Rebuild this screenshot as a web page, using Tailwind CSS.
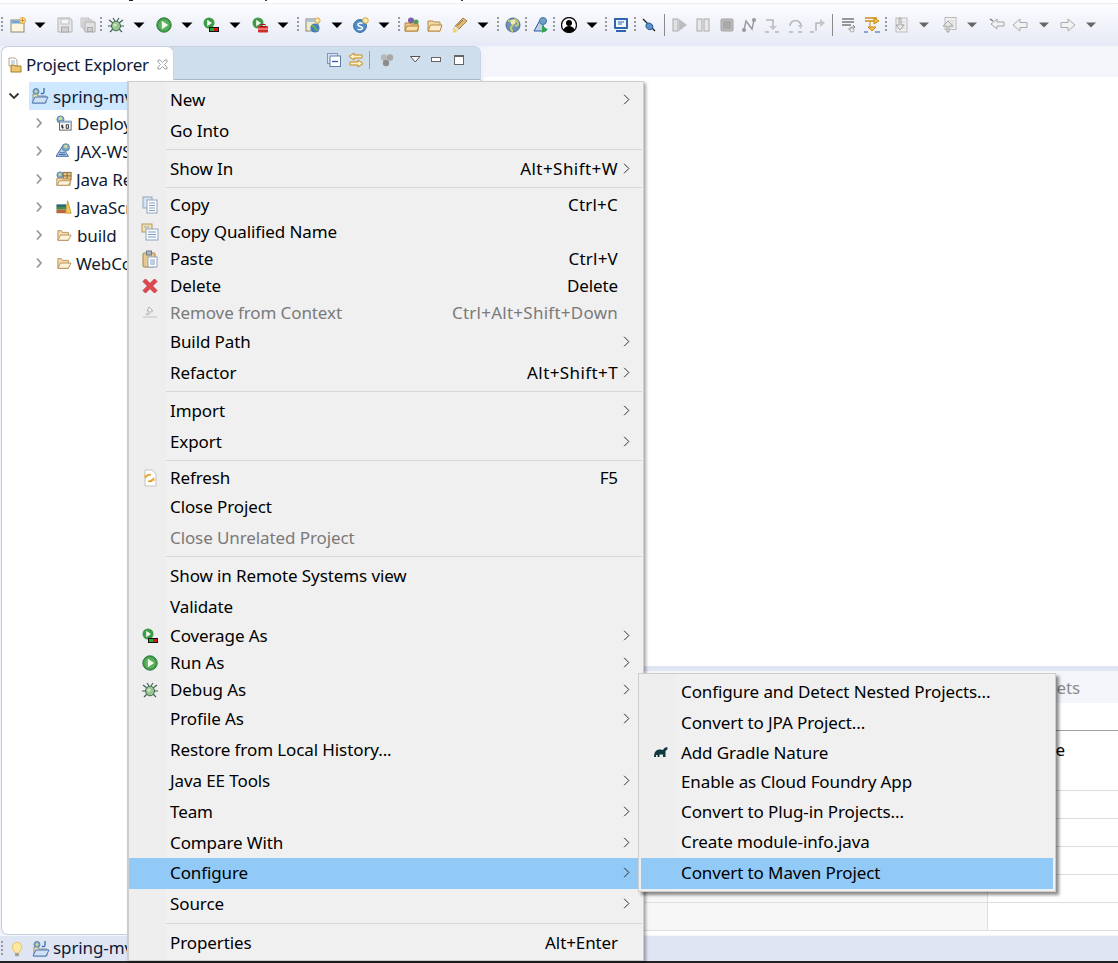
<!DOCTYPE html>
<html><head><meta charset="utf-8">
<script src="https://cdn.jsdelivr.net/npm/@tailwindcss/browser@4"></script>
</head>
<body class="bg-white">
<svg width="0" height="0" class="absolute">
<defs>
<symbol id="arrow" viewBox="0 0 16 16"><polygon points="2.5,5.5 13.5,5.5 8,11" fill="#000"/></symbol>
<symbol id="garrow" viewBox="0 0 16 16"><polygon points="3,5.5 13,5.5 8,10.5" fill="#666"/></symbol>
<symbol id="handle" viewBox="0 0 16 16"><g fill="#9a9a9a"><rect x="7" y="0" width="2" height="2"/><rect x="7" y="4" width="2" height="2"/><rect x="7" y="8" width="2" height="2"/><rect x="7" y="12" width="2" height="2"/></g></symbol>
<symbol id="new" viewBox="0 0 16 16"><rect x="1" y="3" width="13" height="12" fill="#fdf6dc" stroke="#8a8a78"/><rect x="1.5" y="3.5" width="12" height="3" fill="#6da5dc"/><circle cx="12.5" cy="3.5" r="3" fill="#fbe9a8" stroke="#d9a53c"/><path d="M12.5 1.5v4M10.5 3.5h4" stroke="#d08a20"/></symbol>
<symbol id="save" viewBox="0 0 16 16"><path d="M1 1h12l2 2v12H1z" fill="#e6e6e6" stroke="#b5b5b5"/><rect x="4" y="2" width="8" height="5" fill="#f6f6f6" stroke="#c0c0c0"/><rect x="4.5" y="10" width="7" height="5" fill="#cfcfcf" stroke="#aaa"/></symbol>
<symbol id="saveall" viewBox="0 0 16 16"><path d="M1 1h8v9H1z" fill="#e8e8e8" stroke="#c0c0c0"/><path d="M3 3h9v9H3z" fill="#e8e8e8" stroke="#bbb"/><path d="M5 5h10v10H5z" fill="#e2e2e2" stroke="#aaa"/><rect x="7.5" y="10.5" width="5" height="4" fill="#ccc" stroke="#aaa"/></symbol>
<symbol id="bug" viewBox="0 0 16 16"><g stroke="#3c5a50" stroke-width="1.1"><path d="M1 3l4 3M15 3l-4 3M0 9h4M16 9h-4M2 15l3-3M14 15l-3-3M5 1l2 3M11 1l-2 3"/></g><ellipse cx="8" cy="9" rx="4.5" ry="4.8" fill="#9bc58e" stroke="#3d6b54"/><circle cx="7" cy="8" r="1.6" fill="#d5ead0"/></symbol>
<symbol id="run" viewBox="0 0 16 16"><circle cx="8" cy="8" r="7.2" fill="#3f9b4a" stroke="#2f7a3a"/><circle cx="8" cy="8" r="5.6" fill="#58b05c"/><polygon points="5.8,3.8 12.2,8 5.8,12.2" fill="#f4f9ec"/></symbol>
<symbol id="cov" viewBox="0 0 16 16"><circle cx="6" cy="6" r="5.5" fill="#3f9b4a"/><polygon points="4.2,2.8 9,6 4.2,9.2" fill="#f4f9ec"/><rect x="6" y="10" width="10" height="5" fill="#111"/><rect x="7" y="11" width="4" height="3" fill="#1faa2e"/><rect x="11" y="11" width="4" height="3" fill="#d81818"/></symbol>
<symbol id="tool" viewBox="0 0 16 16"><circle cx="6" cy="6" r="5.5" fill="#3f9b4a"/><polygon points="4.2,2.8 9,6 4.2,9.2" fill="#f4f9ec"/><rect x="6" y="9" width="10" height="6.5" rx="1" fill="#d22c2c"/><rect x="9" y="7.5" width="4" height="2" fill="none" stroke="#a01818"/><path d="M6 12h10" stroke="#ffc0c0"/></symbol>
<symbol id="server" viewBox="0 0 16 16"><rect x="1" y="2" width="12" height="12" fill="#f0ead0" stroke="#8c8470"/><rect x="1.5" y="2.5" width="11" height="2.5" fill="#a9c4e0"/><circle cx="10" cy="11" r="4.6" fill="#3f7fc0"/><path d="M7 9c2 0 3 1 3 2s1 2 3 2" stroke="#6fb050" stroke-width="2" fill="none"/><circle cx="12.5" cy="3.5" r="2.6" fill="#fbe9a8" stroke="#d9a53c"/></symbol>
<symbol id="spring" viewBox="0 0 16 16"><circle cx="7" cy="9" r="6.4" fill="#4f8cc8" stroke="#37689c"/><path d="M9.500 6.500C8 5.500 4.500 6 5 8s4.500 1 4.500 3-3.500 2-5 1" fill="none" stroke="#fff" stroke-width="1.500"/><circle cx="12.5" cy="3.5" r="2.8" fill="#fbe9a8" stroke="#d9a53c"/></symbol>
<symbol id="openj" viewBox="0 0 16 16"><circle cx="7" cy="3.5" r="3" fill="#7a5ea8"/><circle cx="12" cy="5" r="2.6" fill="#4f9c58"/><path d="M1 6h5l1 1h7v7H1z" fill="#ecc98a" stroke="#b7813a"/><path d="M1 14l2-5h12l-2 5z" fill="#f7dfa8" stroke="#b7813a"/></symbol>
<symbol id="open" viewBox="0 0 16 16"><path d="M2 4h4l1 1h6v9H1V4z" fill="#f0d9a8" stroke="#b98a44"/><path d="M1 14l2.500-6H15l-2 6z" fill="#fbeccb" stroke="#b98a44"/></symbol>
<symbol id="pen" viewBox="0 0 16 16"><path d="M3 9L11 1l4 3-8 8z" fill="#e0b878" stroke="#a98646"/><path d="M3 9l4 3-2.500 2-3-2z" fill="#f5ead0" stroke="#c0a878" stroke-width=".6"/><path d="M5 9l6-6" stroke="#8a6a38"/><circle cx="2.500" cy="14" r="1.800" fill="#f7d448"/></symbol>
<symbol id="globe" viewBox="0 0 16 16"><circle cx="8" cy="8" r="7" fill="#6d8fb8" stroke="#4d6d96"/><path d="M3 4c3-1 5 1 5 3s-2 2-2 4 1 3 2 3M9 2c2 1 4 3 4 5s-2 2-3 1" stroke="#c0cc70" stroke-width="2" fill="none"/><circle cx="8" cy="5" r="2.500" fill="#f0e8b0"/></symbol>
<symbol id="wsdl" viewBox="0 0 16 16"><polygon points="7,3 1,14 13,14" fill="#bcd0e8" stroke="#2e5a9c"/><circle cx="10" cy="4" r="3.500" fill="#6d9fc8" stroke="#4a74a0"/><polygon points="9,9 15,12.500 9,16" fill="#2da844"/></symbol>
<symbol id="person" viewBox="0 0 16 16"><circle cx="8" cy="8" r="7.500" fill="#fff" stroke="#111" stroke-width="1.300"/><circle cx="8" cy="6" r="3" fill="#000"/><path d="M2.500 13c1-3 3-4 5.500-4s4.500 1 5.500 4c-2 3-9 3-11 0z" fill="#000"/></symbol>
<symbol id="monitor" viewBox="0 0 16 16"><rect x="1" y="1" width="14" height="11" rx="1" fill="#2f65ac"/><rect x="3" y="3" width="10" height="7" fill="#f2f6fb"/><path d="M5 5h6M5 7h4" stroke="#2f65ac"/><rect x="3" y="13" width="10" height="2" fill="#2f65ac"/></symbol>
<symbol id="nobreak" viewBox="0 0 16 16"><path d="M2 2l12 12" stroke="#1d1d1d" stroke-width="1.200"/><ellipse cx="8.500" cy="9" rx="3.500" ry="3" transform="rotate(40 8 9)" fill="#5c92cc" stroke="#2c5f9c"/></symbol>
<symbol id="resume" viewBox="0 0 16 16"><rect x="1" y="2" width="5" height="12" fill="#e0e0e0" stroke="#aaa"/><polygon points="7,2 15,8 7,14" fill="#bdbdbd"/></symbol>
<symbol id="pause" viewBox="0 0 16 16"><rect x="2" y="2" width="5" height="12" fill="#e8e8e8" stroke="#aaa"/><rect x="9" y="2" width="5" height="12" fill="#e8e8e8" stroke="#aaa"/></symbol>
<symbol id="stop" viewBox="0 0 16 16"><rect x="2" y="2" width="12" height="12" rx="1" fill="#bbb" stroke="#a5a5a5"/><rect x="4" y="4" width="8" height="8" fill="#a9a9a9"/></symbol>
<symbol id="disc" viewBox="0 0 16 16"><path d="M3 13l2-9 6 8 2-9" fill="none" stroke="#9a9a9a" stroke-width="1.400"/><circle cx="3" cy="13" r="2" fill="#999"/><circle cx="13" cy="3" r="2" fill="#999"/></symbol>
<symbol id="into" viewBox="0 0 16 16"><path d="M2 3h7v7" fill="none" stroke="#b5b5b5" stroke-width="1.500"/><polygon points="5,9 13,9 9,13" fill="#c5c5c5"/><path d="M1 15h4M11 15h4" stroke="#999"/></symbol>
<symbol id="over" viewBox="0 0 16 16"><path d="M2 9a5.500 5.500 0 0 1 11 0" fill="none" stroke="#b5b5b5" stroke-width="1.500"/><polygon points="10,8 15,8 12.500,12" fill="#c5c5c5"/><path d="M1 15h4M10 15h4" stroke="#999"/></symbol>
<symbol id="ret" viewBox="0 0 16 16"><path d="M6 14V6h6" fill="none" stroke="#b5b5b5" stroke-width="1.500"/><polygon points="10,2 15,6 10,10" fill="#c5c5c5"/><path d="M0 15h4" stroke="#999"/></symbol>
<symbol id="filter" viewBox="0 0 16 16"><path d="M1 2h12M1 5h12M1 8h9" stroke="#7a7a7a" stroke-width="1.400"/><path d="M8 13c0-3 2-3 6-3l-2-2m2 2l-2 2" stroke="#8a8a8a" fill="none"/><circle cx="11" cy="13" r="2" fill="none" stroke="#aaa"/></symbol>
<symbol id="use" viewBox="0 0 16 16"><path d="M1 4h10M1 1h12" stroke="#d08a10" stroke-width="1.400"/><path d="M6 4v7h2" stroke="#d08a10" fill="none"/><polygon points="10,1 15,4 10,7" fill="#f3c450" stroke="#c88a10"/><polygon points="4,10 12,10 8,14" fill="#f3c450" stroke="#c88a10"/><path d="M0 15h4M11 15h5" stroke="#2c5f9c" stroke-width="1.200"/></symbol>
<symbol id="nexta" viewBox="0 0 16 16"><rect x="3" y="1" width="11" height="14" fill="#f0f0f0" stroke="#bbb"/><path d="M6 5h6M6 8h6M6 11h6" stroke="#ccc"/><path d="M6 1v7H3l4 5 4-5H8V1z" fill="#e8e8e8" stroke="#a5a5a5"/></symbol>
<symbol id="preva" viewBox="0 0 16 16"><rect x="4" y="0.500" width="11" height="12" fill="#f0f0f0" stroke="#bbb"/><path d="M7 4h6M7 7h6M7 10h6" stroke="#ccc"/><path d="M6 15V9H2l5-5 5 5H8v6z" fill="#e8e8e8" stroke="#a5a5a5"/></symbol>
<symbol id="lasted" viewBox="0 0 16 16"><path d="M15 5H8V2L2 7l6 5V9h7z" fill="#f2f2f2" stroke="#a5a5a5"/><path d="M1 2l3 2" stroke="#777" stroke-width="1.500"/></symbol>
<symbol id="left" viewBox="0 0 16 16"><path d="M15 5.500H8V2L1 8l7 6v-3.500h7z" fill="#f2f2f2" stroke="#aaa"/></symbol>
<symbol id="right" viewBox="0 0 16 16"><path d="M1 5.500h7V2l7 6-7 6v-3.500H1z" fill="#f2f2f2" stroke="#aaa"/></symbol>
<symbol id="project" viewBox="0 0 18 18"><circle cx="5" cy="4.500" r="3" fill="#7ba7cc" stroke="#5c88ac"/><circle cx="5" cy="4.500" r="1.300" fill="#d6dc88"/><path d="M13 1v4c0 2-2 2-3 1" stroke="#3a6ab0" stroke-width="1.300" fill="none"/><path d="M2 7h4l1 2h8v7H2z" fill="#f2dc9e" stroke="#7f8eab"/><path d="M1 16l3-6h13l-3 6z" fill="#cfe1f5" stroke="#4c78b4"/></symbol>
<symbol id="folder" viewBox="0 0 18 16"><path d="M2 3h4l1 2h7v9H2z" fill="#f2dcae" stroke="#b58a52"/><path d="M2 14l3-6h12l-3 6z" fill="#fdf3da" stroke="#b58a52"/></symbol>
<symbol id="deploy" viewBox="0 0 18 18"><circle cx="5" cy="5" r="4" fill="#7ba7cc" stroke="#5c88ac"/><circle cx="5" cy="4" r="2" fill="#d6dc88"/><rect x="4" y="7" width="13" height="10" fill="#f6f6f6" stroke="#555"/><rect x="4" y="7" width="13" height="2" fill="#9abcdc"/><path d="M6.500 11v3h2M7.500 11v4.500M11.500 11h2.500v4h-2.500z" stroke="#222" fill="none"/></symbol>
<symbol id="jax" viewBox="0 0 18 18"><polygon points="7,4 0,15 14,15" fill="#b9cfe8" stroke="#2e5a9c"/><path d="M4 11h6M3 13h8" stroke="#2e5a9c"/><circle cx="11" cy="5" r="4.200" fill="#7ba7cc" stroke="#5c88ac"/><circle cx="11" cy="4" r="2" fill="#d6dc88"/></symbol>
<symbol id="jres" viewBox="0 0 18 18"><circle cx="4.500" cy="4.500" r="3.500" fill="#7ba7cc" stroke="#5c88ac"/><circle cx="4.500" cy="4" r="1.600" fill="#d6dc88"/><rect x="8" y="1.500" width="9" height="8" fill="#e2c283" stroke="#8a5f30"/><path d="M8 5.500h9M12.500 1.500v8" stroke="#8a5f30"/><path d="M1 8h5l1 1h9v7H1z" fill="#f2dcae" stroke="#b58a52"/><path d="M1 16l3-5h13l-3 5z" fill="#fdf3da" stroke="#b58a52"/></symbol>
<symbol id="js" viewBox="0 0 18 18"><rect x="0.500" y="6" width="11" height="3" fill="#2c6a78"/><rect x="0.500" y="9" width="11" height="3" fill="#4a8a4a"/><rect x="0.500" y="12" width="11" height="4" fill="#b8683a"/><path d="M13 2l4 14h-6z" fill="#f1c95e" stroke="#c89a30"/></symbol>
<symbol id="copy" viewBox="0 0 18 18"><rect x="2" y="1" width="9" height="11" fill="#d9e4f2" stroke="#8fa5bd"/><rect x="6" y="4" width="10" height="13" fill="#fff" stroke="#8fa5bd"/><path d="M8 7h6M8 9.500h6M8 12h6M8 14.500h6" stroke="#7d9dc0"/></symbol>
<symbol id="copyq" viewBox="0 0 18 18"><rect x="1" y="1" width="10" height="8" fill="#f2e0b5" stroke="#b5975e"/><rect x="5" y="6" width="12" height="11" fill="#f8fbff" stroke="#8fa5bd"/><path d="M7 9h8M7 11.500h8M7 14h8" stroke="#7d9dc0"/><path d="M3 4h5" stroke="#8fa5bd"/></symbol>
<symbol id="paste" viewBox="0 0 18 18"><rect x="2" y="3" width="12" height="14" rx="1" fill="#e7c88e" stroke="#a8834a"/><rect x="5.500" y="1" width="5" height="4" fill="#a9b8c9" stroke="#6d7a8c"/><rect x="7" y="7" width="9" height="10" fill="#fff" stroke="#8fa5bd"/><path d="M9 10h5M9 12h5M9 14h5" stroke="#7d9dc0"/></symbol>
<symbol id="delete" viewBox="0 0 18 18"><path d="M2 4.500L4.500 2 9 6.500 13.500 2 16 4.500 11.500 9 16 13.500 13.500 16 9 11.500 4.500 16 2 13.500 6.500 9z" fill="#e0484f" stroke="#c93a42"/></symbol>
<symbol id="remove" viewBox="0 0 18 18"><path d="M8 3l4 4H10c0 3-3 4-5 3 2 0 3-1 3-3H6z" fill="#f4f4f4" stroke="#b0b0b0"/><path d="M2 13h14" stroke="#c0c0c0"/></symbol>
<symbol id="refresh" viewBox="0 0 18 18"><path d="M4 1h7l4 4v12H4z" fill="#fff" stroke="#c2c2c2"/><path d="M10 6a4 4 0 0 0-5 2" stroke="#d8a030" stroke-width="1.800" fill="none"/><path d="M7 12a4 4 0 0 0 5-2" stroke="#d8a030" stroke-width="1.800" fill="none"/><polygon points="3,6 7,7 4,10" fill="#e8b040"/><polygon points="14,12 10,11 13,8" fill="#e8b040"/></symbol>
<symbol id="gradle" viewBox="0 0 14 12"><path d="M0 11C0 6 2 3.500 6 3.500c1.500 0 2.500.5 3 .5C10 2 12 .5 13.500 1.500c.5 2-1 2.500-2 3.500v6H9V8.500H5.500V11H3.500V9H2v2z" fill="#0e3a40"/></symbol>
<symbol id="chev" viewBox="0 0 8 14"><path d="M1 1l6 6-6 6" fill="none" stroke="#222" stroke-width="1.200"/></symbol>
<symbol id="tchev" viewBox="0 0 10 12"><path d="M3 1.500l4 4.500-4 4.500" fill="none" stroke="#9a9a9a" stroke-width="1.800"/></symbol>
<symbol id="tdown" viewBox="0 0 12 10"><path d="M1.500 2.500L6 7l4.500-4.500" fill="none" stroke="#333" stroke-width="1.800"/></symbol>
</defs>
</svg>

<div class="relative w-[1118px] h-[963px] overflow-hidden flex flex-col bg-[#e0e5f4] text-[#000] font-['Noto_Sans','Open_Sans',sans-serif] text-[17px] leading-none tracking-[-0.1px]">

  <div class="h-[4px] bg-white border-b border-[#eeeeee] shrink-0 flex">
    <span class="ml-[129px] w-[4px] h-px bg-[#222]"></span>
    <span class="ml-[132px] w-[2px] h-px bg-[#444]"></span>
    <span class="ml-[194px] w-[2px] h-px bg-[#444]"></span>
  </div>

  <div class="h-[42px] shrink-0 flex items-center bg-gradient-to-b from-[#fbfcfe] to-[#e6eaf6]">
    <svg class="w-4 h-4 shrink-0 ml-[-6px]"><use href="#handle"/></svg>
    <svg class="w-4 h-4 shrink-0"><use href="#new"/></svg>
    <svg class="w-4 h-4 shrink-0 ml-[6px]"><use href="#arrow"/></svg>
    <svg class="w-4 h-4 shrink-0 ml-[9px]"><use href="#save"/></svg>
    <svg class="w-4 h-4 shrink-0 ml-[7px]"><use href="#saveall"/></svg>
    <svg class="w-4 h-4 shrink-0 ml-[-3px]"><use href="#handle"/></svg>
    <svg class="w-4 h-4 shrink-0 ml-[-1px]"><use href="#bug"/></svg>
    <svg class="w-4 h-4 shrink-0 ml-[7px]"><use href="#arrow"/></svg>
    <svg class="w-4 h-4 shrink-0 ml-[9px]"><use href="#run"/></svg>
    <svg class="w-4 h-4 shrink-0 ml-[7px]"><use href="#arrow"/></svg>
    <svg class="w-4 h-4 shrink-0 ml-[8px]"><use href="#cov"/></svg>
    <svg class="w-4 h-4 shrink-0 ml-[8px]"><use href="#arrow"/></svg>
    <svg class="w-4 h-4 shrink-0 ml-[9px]"><use href="#tool"/></svg>
    <svg class="w-4 h-4 shrink-0 ml-[7px]"><use href="#arrow"/></svg>
    <svg class="w-4 h-4 shrink-0 ml-[-1px]"><use href="#handle"/></svg>
    <svg class="w-4 h-4 shrink-0 ml-[-1px]"><use href="#server"/></svg>
    <svg class="w-4 h-4 shrink-0 ml-[8px]"><use href="#arrow"/></svg>
    <svg class="w-4 h-4 shrink-0 ml-[8px]"><use href="#spring"/></svg>
    <svg class="w-4 h-4 shrink-0 ml-[7px]"><use href="#arrow"/></svg>
    <svg class="w-4 h-4 shrink-0 ml-[-1px]"><use href="#handle"/></svg>
    <svg class="w-4 h-4 shrink-0 ml-[-3px]"><use href="#openj"/></svg>
    <svg class="w-4 h-4 shrink-0 ml-[7px]"><use href="#open"/></svg>
    <svg class="w-4 h-4 shrink-0 ml-[9px]"><use href="#pen"/></svg>
    <svg class="w-4 h-4 shrink-0 ml-[7px]"><use href="#arrow"/></svg>
    <svg class="w-4 h-4 shrink-0 ml-[-1px]"><use href="#handle"/></svg>
    <svg class="w-4 h-4 shrink-0 ml-[-1px]"><use href="#globe"/></svg>
    <svg class="w-4 h-4 shrink-0 ml-[-3px]"><use href="#handle"/></svg>
    <svg class="w-4 h-4 shrink-0 ml-[-1px]"><use href="#wsdl"/></svg>
    <svg class="w-4 h-4 shrink-0 ml-[-3px]"><use href="#handle"/></svg>
    <svg class="w-4 h-4 shrink-0 ml-[-1px]"><use href="#person"/></svg>
    <svg class="w-4 h-4 shrink-0 ml-[7px]"><use href="#arrow"/></svg>
    <svg class="w-4 h-4 shrink-0 ml-[-2px]"><use href="#handle"/></svg>
    <svg class="w-4 h-4 shrink-0 ml-[-1px]"><use href="#monitor"/></svg>
    <svg class="w-4 h-4 shrink-0 ml-[-2px]"><use href="#handle"/></svg>
    <svg class="w-4 h-4 shrink-0 ml-[-2px]"><use href="#nobreak"/></svg>
    <span class="w-px h-[22px] bg-[#8a8a8a] shrink-0 ml-[7px]"></span>
    <svg class="w-4 h-4 shrink-0 ml-[7px]"><use href="#resume"/></svg>
    <svg class="w-4 h-4 shrink-0 ml-[7px]"><use href="#pause"/></svg>
    <svg class="w-4 h-4 shrink-0 ml-[8px]"><use href="#stop"/></svg>
    <svg class="w-4 h-4 shrink-0 ml-[6px]"><use href="#disc"/></svg>
    <svg class="w-4 h-4 shrink-0 ml-[7px]"><use href="#into"/></svg>
    <svg class="w-4 h-4 shrink-0 ml-[8px]"><use href="#over"/></svg>
    <svg class="w-4 h-4 shrink-0 ml-[6px]"><use href="#ret"/></svg>
    <span class="w-px h-[22px] bg-[#8a8a8a] shrink-0 ml-[6px]"></span>
    <svg class="w-4 h-4 shrink-0 ml-[8px]"><use href="#filter"/></svg>
    <svg class="w-4 h-4 shrink-0 ml-[7px]"><use href="#use"/></svg>
    <svg class="w-4 h-4 shrink-0 ml-[-2px]"><use href="#handle"/></svg>
    <svg class="w-4 h-4 shrink-0 ml-[-1px]"><use href="#nexta"/></svg>
    <svg class="w-4 h-4 shrink-0 ml-[7px]"><use href="#garrow"/></svg>
    <svg class="w-4 h-4 shrink-0 ml-[9px]"><use href="#preva"/></svg>
    <svg class="w-4 h-4 shrink-0 ml-[7px]"><use href="#garrow"/></svg>
    <svg class="w-4 h-4 shrink-0 ml-[9px]"><use href="#lasted"/></svg>
    <svg class="w-4 h-4 shrink-0 ml-[7px]"><use href="#left"/></svg>
    <svg class="w-4 h-4 shrink-0 ml-[8px]"><use href="#garrow"/></svg>
    <svg class="w-4 h-4 shrink-0 ml-[8px]"><use href="#right"/></svg>
    <svg class="w-4 h-4 shrink-0 ml-[7px]"><use href="#garrow"/></svg>
  </div>

  <div class="h-[889px] shrink-0 flex bg-[#f0f3fa]">
    <!-- left view -->
    <div class="w-[480px] ml-px flex flex-col">
      <div class="h-[34px] shrink-0 flex bg-[#cfdeed] rounded-t-[7px] border-t border-r border-[#c8d2e2]">
        <div class="w-[173px] h-[34px] bg-white rounded-t-[7px] border-l border-r border-t border-[#c8d2e2] -mt-px flex items-center pl-[5px] pt-[2px] tracking-[-0.25px]">
          <svg class="w-[16px] h-[16px] shrink-0" viewBox="0 0 16 16"><path d="M2 1h6l2 2v6H2z" fill="#fff" stroke="#b5a88e"/><path d="M4 4h4M4 6h4" stroke="#9db3cc"/><path d="M4 8h3l1 1h6v6H4z" fill="#ecc56e" stroke="#a87c2e"/></svg>
          <span class="ml-[3px] text-[#0f1a33] whitespace-nowrap">Project Explorer</span>
          <svg class="ml-[8px] w-[11px] h-[11px] shrink-0" viewBox="0 0 11 11"><path d="M1 1h2l2.500 2.500L8 1h2v2L7.500 5.500 10 8v2H8L5.500 7.500 3 10H1V8l2.500-2.500L1 3z" fill="#fff" stroke="#8a8a8a" stroke-width=".8"/></svg>
        </div>
        <div class="flex-1 flex items-center pl-[153px] pb-[7px] border-b border-[#a9b8ca]">
          <svg class="w-[14px] h-[14px] shrink-0" viewBox="0 0 14 14"><rect x="0.500" y="0.500" width="10" height="10" fill="#dbe5f2" stroke="#7f97b5"/><rect x="3" y="3" width="10.500" height="10.500" fill="#fff" stroke="#5c7da6"/><path d="M5 8.500h6" stroke="#2f5f9c" stroke-width="1.300"/></svg>
          <svg class="ml-[7px] w-[16px] h-[16px] shrink-0" viewBox="0 0 16 16"><path d="M6 1L1 4.500 6 8V6h8V3H6z" fill="#fdf0c4" stroke="#c48a20"/><path d="M10 8l5 3.500-5 3.500v-2H2v-3h8z" fill="#fdf0c4" stroke="#c48a20"/></svg>
          <span class="ml-[5px] w-px h-[18px] bg-[#8fa0b5] shrink-0"></span>
          <svg class="ml-[10px] w-[14px] h-[14px] shrink-0" viewBox="0 0 14 14"><circle cx="4" cy="4.500" r="3.200" fill="#b8b8b8"/><circle cx="10" cy="4.500" r="3.200" fill="#a8a8a8"/><circle cx="6" cy="10" r="3.200" fill="#8c8c8c"/></svg>
          <svg class="ml-[16px] w-[11px] h-[7px] shrink-0" viewBox="0 0 11 7"><path d="M.5.500h9.500L5.250 6z" fill="#f4f7fb" stroke="#555"/></svg>
          <span class="ml-[10px] w-[10px] h-[5px] bg-white border border-[#666] shrink-0"></span>
          <span class="ml-[13px] w-[10px] h-[10px] bg-white border border-[#666] border-t-[2px] shrink-0"></span>
        </div>
      </div>
      <div class="h-[855px] bg-white border-l border-r border-b border-[#c5cde0] rounded-bl-[7px] pt-[2px]">
        <div class="flex items-center h-[28px]">
          <svg class="ml-[6px] w-[12px] h-[10px] shrink-0"><use href="#tdown"/></svg>
          <div class="ml-[9px] w-[98px] h-[28px] bg-[#cde8ff] flex items-center pl-[2px] shrink-0">
            <svg class="w-[18px] h-[18px] shrink-0"><use href="#project"/></svg>
            <span class="ml-[4px] whitespace-nowrap text-[#0f1a33]">spring-mvc</span>
          </div>
        </div>
        <div class="flex items-center h-[28px] pb-[2px]"><svg class="ml-[32px] w-[10px] h-[12px] shrink-0"><use href="#tchev"/></svg><svg class="ml-[12px] w-[16px] h-[16px] shrink-0"><use href="#deploy"/></svg><span class="ml-[5px] text-[#0f1a33] whitespace-nowrap">Deployment</span></div>
        <div class="flex items-center h-[28px] pb-[2px]"><svg class="ml-[32px] w-[10px] h-[12px] shrink-0"><use href="#tchev"/></svg><svg class="ml-[12px] w-[16px] h-[16px] shrink-0"><use href="#jax"/></svg><span class="ml-[4px] text-[#0f1a33] whitespace-nowrap">JAX-WS</span></div>
        <div class="flex items-center h-[28px] pb-[2px]"><svg class="ml-[32px] w-[10px] h-[12px] shrink-0"><use href="#tchev"/></svg><svg class="ml-[12px] w-[16px] h-[16px] shrink-0"><use href="#jres"/></svg><span class="ml-[4px] text-[#0f1a33] whitespace-nowrap">Java Resources</span></div>
        <div class="flex items-center h-[28px] pb-[2px]"><svg class="ml-[32px] w-[10px] h-[12px] shrink-0"><use href="#tchev"/></svg><svg class="ml-[12px] w-[16px] h-[16px] shrink-0"><use href="#js"/></svg><span class="ml-[4px] text-[#0f1a33] whitespace-nowrap">JavaScript</span></div>
        <div class="flex items-center h-[28px] pb-[2px]"><svg class="ml-[32px] w-[10px] h-[12px] shrink-0"><use href="#tchev"/></svg><svg class="ml-[12px] w-[16px] h-[14px] shrink-0"><use href="#folder"/></svg><span class="ml-[5px] text-[#0f1a33]">build</span></div>
        <div class="flex items-center h-[28px] pb-[2px]"><svg class="ml-[32px] w-[10px] h-[12px] shrink-0"><use href="#tchev"/></svg><svg class="ml-[12px] w-[16px] h-[14px] shrink-0"><use href="#folder"/></svg><span class="ml-[4px] text-[#0f1a33] whitespace-nowrap">WebContent</span></div>
      </div>
    </div>

    <!-- right stack -->
    <div class="ml-[3px] flex-1 flex flex-col">
      <div class="h-[31px] shrink-0 bg-[#f3f5fb] rounded-tl-[7px]"></div>
      <div class="h-[589px] shrink-0 bg-white"></div>
      <div class="h-[5px] shrink-0 bg-[#e0e5f4]"></div>
      <div class="h-[264px] shrink-0 bg-white flex flex-col">
        <div class="h-[32px] shrink-0 bg-[#f3f5fb] flex items-center justify-end pr-[38px] text-[#8c8c8c]">ets</div>
        <div class="h-[28px] shrink-0 border-b border-[#a0a0a0]"></div>
        <div class="h-[60px] shrink-0 border-b border-[#dedede] flex items-start justify-end pr-[53px] pt-[10px]">e</div>
        <div class="h-[28px] shrink-0 border-b border-[#dedede]"></div>
        <div class="h-[28px] shrink-0 border-b border-[#dedede]"></div>
        <div class="h-[28px] shrink-0 border-b border-[#dedede]"></div>
        <div class="h-[28px] shrink-0 border-b border-[#dedede]"><div class="h-full w-[504px] bg-[#f7f7f7] border-r border-[#dedede]"></div></div>
        <div class="h-[28px] shrink-0 border-b border-[#dedede]"><div class="h-full w-[504px] bg-[#f7f7f7] border-r border-[#dedede]"></div></div>
      </div>
    </div>
  </div>

  <div class="h-[26px] shrink-0 flex items-center bg-[#e0e5f4] border-t border-[#f3f5fb]">
    <svg class="ml-[-6px] w-[16px] h-[16px] shrink-0"><use href="#handle"/></svg>
    <svg class="ml-[1px] w-[12px] h-[16px] shrink-0" viewBox="0 0 16 20"><path d="M8 1a6.500 6.500 0 0 0-4 11.500c1 1 1.500 2 1.500 3h5c0-1 .5-2 1.500-3A6.500 6.500 0 0 0 8 1z" fill="#fce9a0" stroke="#e2b848"/><rect x="5.500" y="15.500" width="5" height="4" fill="#9a9a9a"/></svg>
    <svg class="ml-[9px] w-[18px] h-[18px] shrink-0"><use href="#project"/></svg>
    <span class="ml-[3px] pb-[2px] text-[#0f1a33] whitespace-nowrap">spring-mvc</span>
  </div>
  <div class="h-[2px] shrink-0 bg-[#222]"></div>

  <!-- context menu -->
  <div class="absolute left-[127px] top-[81px] w-[517px] h-[880px] bg-[linear-gradient(90deg,#eeeeee_37px,#f0f0f0_37px)] border-l-2 border-t border-r border-b border-[#cdcdcd] shadow-[2px_2px_3px_rgba(0,0,0,.35)] pt-[3px] pr-px">
    <div class="flex items-center h-[31px] pb-[2px]"><span class="w-[41px] shrink-0"></span><span class="flex-1 whitespace-nowrap">New</span><svg class="w-[7px] h-[11px] mr-[12px]"><use href="#chev"/></svg></div>
    <div class="flex items-center h-[31px] pb-[2px]"><span class="w-[41px] shrink-0"></span><span class="flex-1 whitespace-nowrap">Go Into</span></div>
    <div class="h-[7px] pt-[2px] pl-[37px]"><div class="h-px bg-[#d7d7d7]"></div></div>
    <div class="flex items-center h-[31px] pb-[2px]"><span class="w-[41px] shrink-0"></span><span class="flex-1 whitespace-nowrap">Show In</span><span class="whitespace-nowrap tracking-[0.45px]">Alt+Shift+W</span><span class="w-[5px]"></span><svg class="w-[7px] h-[11px] mr-[12px]"><use href="#chev"/></svg></div>
    <div class="h-[7px] pt-[2px] pl-[37px]"><div class="h-px bg-[#d7d7d7]"></div></div>
    <div class="flex items-center h-[27px] pb-[2px]"><span class="w-[41px] shrink-0 flex items-center pl-[12px]"><svg class="w-[18px] h-[18px]"><use href="#copy"/></svg></span><span class="flex-1 whitespace-nowrap">Copy</span><span class="whitespace-nowrap mr-[24px] tracking-[0.2px]">Ctrl+C</span></div>
    <div class="flex items-center h-[27px] pb-[2px]"><span class="w-[41px] shrink-0 flex items-center pl-[12px]"><svg class="w-[18px] h-[18px]"><use href="#copyq"/></svg></span><span class="flex-1 whitespace-nowrap">Copy Qualified Name</span></div>
    <div class="flex items-center h-[27px] pb-[2px]"><span class="w-[41px] shrink-0 flex items-center pl-[12px]"><svg class="w-[18px] h-[18px]"><use href="#paste"/></svg></span><span class="flex-1 whitespace-nowrap">Paste</span><span class="whitespace-nowrap mr-[24px] tracking-[0.2px]">Ctrl+V</span></div>
    <div class="flex items-center h-[27px] pb-[2px]"><span class="w-[41px] shrink-0 flex items-center pl-[12px]"><svg class="w-[18px] h-[18px]"><use href="#delete"/></svg></span><span class="flex-1 whitespace-nowrap">Delete</span><span class="whitespace-nowrap mr-[24px]">Delete</span></div>
    <div class="flex items-center h-[27px] pb-[2px] text-[#7a7a7a]"><span class="w-[41px] shrink-0 flex items-center pl-[12px]"><svg class="w-[18px] h-[18px]"><use href="#remove"/></svg></span><span class="flex-1 whitespace-nowrap">Remove from Context</span><span class="whitespace-nowrap mr-[24px] tracking-[0.25px]">Ctrl+Alt+Shift+Down</span></div>
    <div class="flex items-center h-[31px] pb-[2px]"><span class="w-[41px] shrink-0"></span><span class="flex-1 whitespace-nowrap">Build Path</span><svg class="w-[7px] h-[11px] mr-[12px]"><use href="#chev"/></svg></div>
    <div class="flex items-center h-[31px] pb-[2px]"><span class="w-[41px] shrink-0"></span><span class="flex-1 whitespace-nowrap">Refactor</span><span class="whitespace-nowrap tracking-[0.4px]">Alt+Shift+T</span><span class="w-[5px]"></span><svg class="w-[7px] h-[11px] mr-[12px]"><use href="#chev"/></svg></div>
    <div class="h-[7px] pt-[2px] pl-[37px]"><div class="h-px bg-[#d7d7d7]"></div></div>
    <div class="flex items-center h-[31px] pb-[2px]"><span class="w-[41px] shrink-0"></span><span class="flex-1 whitespace-nowrap">Import</span><svg class="w-[7px] h-[11px] mr-[12px]"><use href="#chev"/></svg></div>
    <div class="flex items-center h-[31px] pb-[2px]"><span class="w-[41px] shrink-0"></span><span class="flex-1 whitespace-nowrap">Export</span><svg class="w-[7px] h-[11px] mr-[12px]"><use href="#chev"/></svg></div>
    <div class="h-[7px] pt-[2px] pl-[37px]"><div class="h-px bg-[#d7d7d7]"></div></div>
    <div class="flex items-center h-[27px] pb-[2px]"><span class="w-[41px] shrink-0 flex items-center pl-[12px]"><svg class="w-[18px] h-[18px]"><use href="#refresh"/></svg></span><span class="flex-1 whitespace-nowrap">Refresh</span><span class="whitespace-nowrap mr-[24px]">F5</span></div>
    <div class="flex items-center h-[31px] pb-[2px]"><span class="w-[41px] shrink-0"></span><span class="flex-1 whitespace-nowrap">Close Project</span></div>
    <div class="flex items-center h-[31px] pb-[2px] text-[#7a7a7a]"><span class="w-[41px] shrink-0"></span><span class="flex-1 whitespace-nowrap">Close Unrelated Project</span></div>
    <div class="h-[7px] pt-[2px] pl-[37px]"><div class="h-px bg-[#d7d7d7]"></div></div>
    <div class="flex items-center h-[31px] pb-[2px]"><span class="w-[41px] shrink-0"></span><span class="flex-1 whitespace-nowrap">Show in Remote Systems view</span></div>
    <div class="flex items-center h-[31px] pb-[2px]"><span class="w-[41px] shrink-0"></span><span class="flex-1 whitespace-nowrap">Validate</span></div>
    <div class="flex items-center h-[27px] pb-[2px]"><span class="w-[41px] shrink-0 flex items-center pl-[13px]"><svg class="w-[16px] h-[16px]"><use href="#cov"/></svg></span><span class="flex-1 whitespace-nowrap">Coverage As</span><svg class="w-[7px] h-[11px] mr-[12px]"><use href="#chev"/></svg></div>
    <div class="flex items-center h-[27px] pb-[2px]"><span class="w-[41px] shrink-0 flex items-center pl-[13px]"><svg class="w-[16px] h-[16px]"><use href="#run"/></svg></span><span class="flex-1 whitespace-nowrap">Run As</span><svg class="w-[7px] h-[11px] mr-[12px]"><use href="#chev"/></svg></div>
    <div class="flex items-center h-[27px] pb-[2px]"><span class="w-[41px] shrink-0 flex items-center pl-[13px]"><svg class="w-[16px] h-[16px]"><use href="#bug"/></svg></span><span class="flex-1 whitespace-nowrap">Debug As</span><svg class="w-[7px] h-[11px] mr-[12px]"><use href="#chev"/></svg></div>
    <div class="flex items-center h-[31px] pb-[2px]"><span class="w-[41px] shrink-0"></span><span class="flex-1 whitespace-nowrap">Profile As</span><svg class="w-[7px] h-[11px] mr-[12px]"><use href="#chev"/></svg></div>
    <div class="flex items-center h-[31px] pb-[2px]"><span class="w-[41px] shrink-0"></span><span class="flex-1 whitespace-nowrap">Restore from Local History...</span></div>
    <div class="flex items-center h-[31px] pb-[2px]"><span class="w-[41px] shrink-0"></span><span class="flex-1 whitespace-nowrap">Java EE Tools</span><svg class="w-[7px] h-[11px] mr-[12px]"><use href="#chev"/></svg></div>
    <div class="flex items-center h-[31px] pb-[2px]"><span class="w-[41px] shrink-0"></span><span class="flex-1 whitespace-nowrap">Team</span><svg class="w-[7px] h-[11px] mr-[12px]"><use href="#chev"/></svg></div>
    <div class="flex items-center h-[30px] pb-[2px]"><span class="w-[41px] shrink-0"></span><span class="flex-1 whitespace-nowrap">Compare With</span><svg class="w-[7px] h-[11px] mr-[12px]"><use href="#chev"/></svg></div>
    <div class="flex items-center h-[31px] pb-[2px] bg-[#91c9f7]"><span class="w-[41px] shrink-0"></span><span class="flex-1 whitespace-nowrap">Configure</span><svg class="w-[7px] h-[11px] mr-[12px]"><use href="#chev"/></svg></div>
    <div class="flex items-center h-[31px] pb-[2px]"><span class="w-[41px] shrink-0"></span><span class="flex-1 whitespace-nowrap">Source</span><svg class="w-[7px] h-[11px] mr-[12px]"><use href="#chev"/></svg></div>
    <div class="h-[8px] pt-[3px] pl-[37px]"><div class="h-px bg-[#d7d7d7]"></div></div>
    <div class="flex items-center h-[31px] pb-[2px]"><span class="w-[41px] shrink-0"></span><span class="flex-1 whitespace-nowrap">Properties</span><span class="whitespace-nowrap mr-[24px]">Alt+Enter</span></div>
  </div>

  <!-- submenu -->
  <div class="absolute left-[638px] top-[673px] w-[418px] h-[219px] bg-[linear-gradient(90deg,#eeeeee_37px,#f0f0f0_37px)] border border-[#cdcdcd] shadow-[3px_3px_3px_rgba(0,0,0,.45)] pt-[3px] px-[2px]">
    <div class="flex items-center h-[31px] pb-[2px]"><span class="w-[40px] shrink-0"></span><span class="whitespace-nowrap">Configure and Detect Nested Projects...</span></div>
    <div class="flex items-center h-[31px] pb-[2px]"><span class="w-[40px] shrink-0"></span><span class="whitespace-nowrap">Convert to JPA Project...</span></div>
    <div class="flex items-center h-[28px] pb-[2px]"><span class="w-[40px] shrink-0 pl-[13px] flex items-center"><svg class="w-[14px] h-[12px]"><use href="#gradle"/></svg></span><span class="whitespace-nowrap">Add Gradle Nature</span></div>
    <div class="flex items-center h-[31px] pb-[2px]"><span class="w-[40px] shrink-0"></span><span class="whitespace-nowrap">Enable as Cloud Foundry App</span></div>
    <div class="flex items-center h-[29px] pb-[2px]"><span class="w-[40px] shrink-0"></span><span class="whitespace-nowrap">Convert to Plug-in Projects...</span></div>
    <div class="flex items-center h-[31px] pb-[2px]"><span class="w-[40px] shrink-0"></span><span class="whitespace-nowrap">Create module-info.java</span></div>
    <div class="flex items-center h-[31px] pb-[2px] bg-[#91c9f7]"><span class="w-[40px] shrink-0"></span><span class="whitespace-nowrap">Convert to Maven Project</span></div>
  </div>
</div>
</body></html>
